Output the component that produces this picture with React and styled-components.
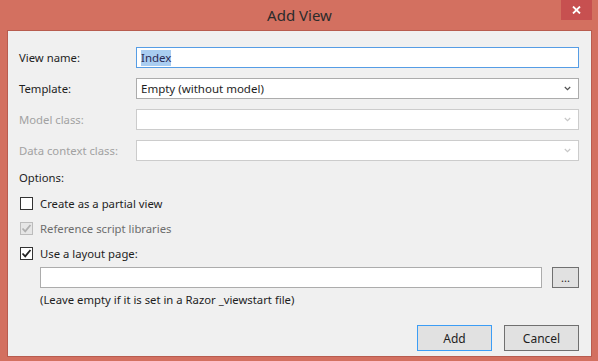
import styled, { createGlobalStyle } from "styled-components";

const GlobalStyle = createGlobalStyle`
    html, body {
        margin: 0;
        padding: 0;
        background: #d37060;
    }
    * {
        box-sizing: border-box;
    }
`;

const Frame = styled.div`
    width: 598px;
    height: 361px;
    padding: 0 6px 4px 7px;
    background-color: #d37060;

    display: flex;
    flex-direction: column;
    font-family: "Noto Sans", "Liberation Sans", sans-serif;
    font-size: 11.3px;
    color: #1e1e1e;
`;

const TitleBar = styled.div`
    height: 30px;
    display: grid;
    grid-template-columns: 1fr auto 1fr;
`;

const Title = styled.div`
    grid-column: 2;
    padding-top: 5px;
    font-size: 15px;
    color: #2b2b2b;
`;

const CloseBtn = styled.div`
    grid-column: 3;
    justify-self: end;
    width: 31px;
    height: 20px;
    background-color: #c75050;

    display: flex;
    align-items: center;
    justify-content: center;
`;

const Client = styled.div`
    flex: 1;
    background-color: #f0f0f0;
    border: 1px solid #b85c4f;
    padding: 16px 12px 5px 11px;

    display: flex;
    flex-direction: column;
`;

const FormGrid = styled.div`
    display: grid;
    grid-template-columns: 117px 1fr;
    grid-auto-rows: 21px;
    row-gap: 10px;
    align-items: center;
`;

const Label = styled.div`
    color: ${(props) => props.$disabled ? "#a2a2a2" : "#1e1e1e"};
`;

const Field = styled.div`
    height: 21px;
    background-color: #ffffff;
    border: 1px solid ${(props) => props.$focused ? "#569de5" : props.$disabled ? "#cccccc" : "#acacac"};
    padding: 0 7px 0 4px;

    display: flex;
    align-items: center;
    justify-content: space-between;
    font-size: 11.5px;
    line-height: 16px;
`;

const Selected = styled.span`
    background-color: #a9cdf1;
    color: #2a2a55;
`;

const SectionTitle = styled.div`
    margin-top: 9px;
    line-height: 16px;
`;

const CheckList = styled.div`
    margin-top: 11px;
    display: flex;
    flex-direction: column;
    gap: 12px;
`;

const CheckRow = styled.div`
    height: 13px;
    padding-left: 1px;
    display: flex;
    align-items: center;
    gap: 7px;
    color: ${(props) => props.$disabled ? "#6d6d6d" : "#1e1e1e"};
`;

const Box = styled.div`
    width: 13px;
    height: 13px;
    flex: none;
    background-color: ${(props) => props.$disabled ? "#e6e6e6" : "#ffffff"};
    border: 1px solid ${(props) => props.$disabled ? "#bcbcbc" : "#333333"};

    display: flex;
    align-items: center;
    justify-content: center;
`;

const PathRow = styled.div`
    margin: 7px 0 0 21px;
    display: flex;
    gap: 10px;
`;

const PathInput = styled.div`
    flex: 1;
    height: 21px;
    background-color: #ffffff;
    border: 1px solid #acacac;
`;

const BrowseBtn = styled.div`
    width: 27px;
    height: 21px;
    background-color: #e1e1e1;
    border: 1px solid #707070;

    display: flex;
    align-items: center;
    justify-content: center;
    font-size: 11px;
    line-height: 1;
`;

const Hint = styled.div`
    margin: 4px 0 0 21px;
    line-height: 16px;
`;

const Footer = styled.div`
    margin-top: auto;
    display: flex;
    justify-content: flex-end;
    gap: 12px;
`;

const Button = styled.div`
    width: 75px;
    height: 26px;
    background-color: #e1e1e1;
    border: 1px solid ${(props) => props.$default ? "#3c9df5" : "#707070"};

    display: flex;
    align-items: center;
    justify-content: center;
    font-size: 12px;
`;

const Chevron = ({ disabled }) => (
    <svg width="7" height="5" viewBox="0 0 7 5">
        <path d="M0.8 1 L3.5 3.7 L6.2 1" fill="none" stroke={disabled ? "#c8c8c8" : "#505050"} strokeWidth="1.2" />
    </svg>
);

const Check = ({ disabled }) => (
    <svg width="11" height="11" viewBox="0 0 11 11">
        <path d="M1.5 5.5 L4.2 8.3 L9.5 2" fill="none" stroke={disabled ? "#b0b0b0" : "#222222"} strokeWidth="1.8" />
    </svg>
);

export default function App() {
    return <>
        <GlobalStyle />
        <Frame>
            <TitleBar>
                <Title>Add View</Title>
                <CloseBtn>
                    <svg width="9" height="8" viewBox="0 0 9 8">
                        <path d="M1 0.5 L8 7.5 M8 0.5 L1 7.5" stroke="#ffffff" strokeWidth="1.8" />
                    </svg>
                </CloseBtn>
            </TitleBar>
            <Client>
                <FormGrid>
                    <Label>View name:</Label>
                    <Field $focused><Selected>Index</Selected></Field>
                    <Label>Template:</Label>
                    <Field>Empty (without model)<Chevron /></Field>
                    <Label $disabled>Model class:</Label>
                    <Field $disabled><span /><Chevron disabled /></Field>
                    <Label $disabled>Data context class:</Label>
                    <Field $disabled><span /><Chevron disabled /></Field>
                </FormGrid>
                <SectionTitle>Options:</SectionTitle>
                <CheckList>
                    <CheckRow><Box />Create as a partial view</CheckRow>
                    <CheckRow $disabled><Box $disabled><Check disabled /></Box>Reference script libraries</CheckRow>
                    <CheckRow><Box><Check /></Box>Use a layout page:</CheckRow>
                </CheckList>
                <PathRow>
                    <PathInput />
                    <BrowseBtn>...</BrowseBtn>
                </PathRow>
                <Hint>(Leave empty if it is set in a Razor _viewstart file)</Hint>
                <Footer>
                    <Button $default>Add</Button>
                    <Button>Cancel</Button>
                </Footer>
            </Client>
        </Frame>
    </>;
}
